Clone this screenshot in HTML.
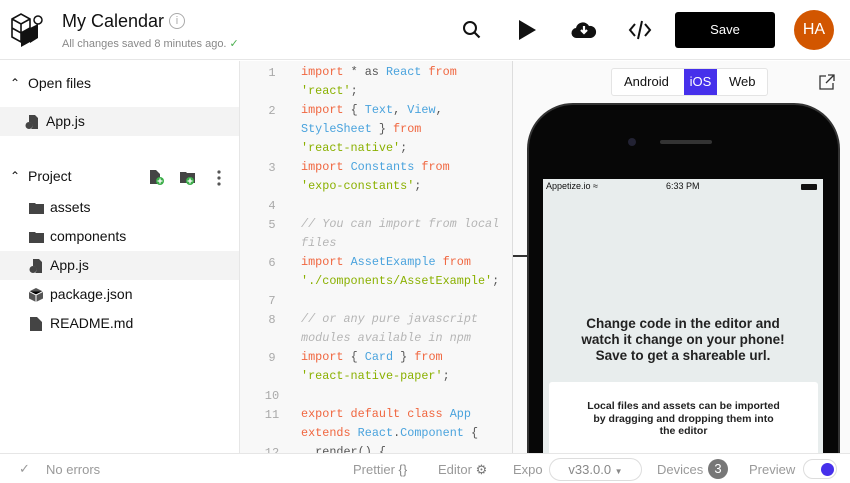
<!DOCTYPE html>
<html><head><style>
*{margin:0;padding:0;box-sizing:border-box}
body{width:850px;height:483px;overflow:hidden;font-family:"Liberation Sans",sans-serif;background:#fff;position:relative;color:#111}
.abs{position:absolute}
.hdr{left:0;top:0;width:850px;height:60px;border-bottom:1px solid #e6e6e6}
.side{left:0;top:61px;width:240px;height:392px;background:#fff;border-right:1px solid #e6e6e6}
.row{position:absolute;left:0;width:239px;height:29px;font-size:14px;line-height:29px}
.ed{left:240px;top:61px;width:272px;height:392px;background:#f8f8f8;font-family:"Liberation Mono",monospace;font-size:11.8px;overflow:hidden}
.ln{position:absolute;left:0;width:64px;text-align:center;color:#aaa;font-size:12px}
.cl{position:absolute;left:61px;white-space:pre;color:#555}
.k{color:#f0663f}.i{color:#4aa3dd}.s{color:#8ab000}.c{color:#b5b5b5;font-style:italic}
.pv{left:512px;top:61px;width:338px;height:392px;background:#fafafa;border-left:1px solid #ddd;overflow:hidden}
.ft{left:0;top:453px;width:850px;height:30px;border-top:1px solid #e6e6e6;background:#fff;font-size:13px;color:#999}
</style></head><body>
<div class="abs hdr">
 <svg class="abs" style="left:10px;top:10px" width="38" height="38" viewBox="0 0 38 38"><g fill="none" stroke="#111" stroke-width="1.6"><path d="M2 9l9-5 9 5v18l-9 5-9-5z M2 18l9 5 9-5 M11 14v18 M2 9l9 5 9-5"/></g><path d="M20 18l8-4v14l-8 5z M11 23l9-5v14l-9 5z" fill="#111"/><circle cx="28" cy="10" r="4" fill="#fff" stroke="#111" stroke-width="1.5"/></svg>
 <div class="abs" style="left:62px;top:11px;font-size:18px;color:#111">My Calendar</div>
 <div class="abs" style="left:169px;top:13px;width:16px;height:16px;border:1.3px solid #aaa;border-radius:50%;font-size:11px;color:#aaa;text-align:center;line-height:14px">i</div>
 <div class="abs" style="left:62px;top:37px;font-size:11px;color:#888">All changes saved 8 minutes ago. <span style="color:#4caf50">✓</span></div>
 <svg class="abs" style="left:462px;top:20px" width="20" height="20" viewBox="0 0 20 20"><circle cx="8" cy="8" r="6" fill="none" stroke="#111" stroke-width="2"/><path d="M12.5 12.5l5 5" stroke="#111" stroke-width="2.2"/></svg>
 <svg class="abs" style="left:519px;top:20px" width="18" height="20"><path d="M0 0l17 10-17 10z" fill="#111"/></svg>
 <svg class="abs" style="left:571px;top:20px" width="26" height="20" viewBox="0 0 26 20"><path d="M6 18a5 5 0 0 1-1-10 7 7 0 0 1 13-2 6 6 0 0 1 2 12z" fill="#111"/><path d="M13 6v7 M10 10l3 3 3-3" stroke="#fff" stroke-width="2.2" fill="none"/></svg>
 <svg class="abs" style="left:628px;top:19px" width="24" height="22"><path d="M7 5l-5 6 5 6 M17 5l5 6-5 6 M14 2l-4 18" stroke="#111" stroke-width="2" fill="none"/></svg>
 <div class="abs" style="left:675px;top:12px;width:100px;height:36px;background:#000;border-radius:3px;color:#fff;font-size:13px;text-align:center;line-height:36px">Save</div>
 <div class="abs" style="left:794px;top:10px;width:40px;height:40px;background:#d25600;border-radius:50%;color:#fff;font-size:16px;text-align:center;line-height:40px">HA</div>
</div>
<div class="abs side">
 <div class="row" style="top:8px"><span style="position:absolute;left:10px;font-size:12px">⌃</span><span style="position:absolute;left:28px">Open files</span></div>
 <div class="row" style="top:46px;background:#f3f3f3"><svg style="position:absolute;left:25px;top:8px" width="13" height="14"><path d="M4 0h6l3 3v11H6A4 4 0 0 0 4 7z" fill="#444"/><circle cx="4" cy="10.5" r="3.5" fill="#444"/></svg><span style="position:absolute;left:46px">App.js</span></div>
 <div class="row" style="top:101px"><span style="position:absolute;left:10px;font-size:12px">⌃</span><span style="position:absolute;left:28px">Project</span>
  <svg style="position:absolute;left:150px;top:8px" width="14" height="16"><path d="M0 0h6l4 4v10H0z" fill="#444"/><circle cx="10" cy="11" r="4" fill="#3cae4a"/><path d="M10 8.5v5M7.5 11h5" stroke="#fff" stroke-width="1.3"/></svg>
  <svg style="position:absolute;left:180px;top:8px" width="16" height="16"><path d="M0 2h6l1 1h8v10H0z" fill="#444"/><circle cx="10" cy="11" r="4" fill="#3cae4a"/><path d="M10 8.5v5M7.5 11h5" stroke="#fff" stroke-width="1.3"/></svg>
  <svg style="position:absolute;left:217px;top:8px" width="4" height="16"><circle cx="2" cy="2" r="1.6" fill="#555"/><circle cx="2" cy="8" r="1.6" fill="#555"/><circle cx="2" cy="14" r="1.6" fill="#555"/></svg></div>
 <div class="row" style="top:132px"><svg style="position:absolute;left:29px;top:9px" width="15" height="12"><path d="M0 1h6l1 1h8v10H0z" fill="#444"/></svg><span style="position:absolute;left:50px">assets</span></div>
 <div class="row" style="top:161px"><svg style="position:absolute;left:29px;top:9px" width="15" height="12"><path d="M0 1h6l1 1h8v10H0z" fill="#444"/></svg><span style="position:absolute;left:50px">components</span></div>
 <div class="row" style="top:190px;background:#f3f3f3"><svg style="position:absolute;left:29px;top:8px" width="13" height="14"><path d="M4 0h6l3 3v11H6A4 4 0 0 0 4 7z" fill="#444"/><circle cx="4" cy="10.5" r="3.5" fill="#444"/></svg><span style="position:absolute;left:50px">App.js</span></div>
 <div class="row" style="top:219px"><svg style="position:absolute;left:29px;top:8px" width="14" height="14"><path d="M7 0l7 3.5v7L7 14 0 10.5v-7z" fill="#555"/><path d="M0 3.5l7 3.5 7-3.5M7 7v7" stroke="#fff" stroke-width="1"/></svg><span style="position:absolute;left:50px">package.json</span></div>
 <div class="row" style="top:248px"><svg style="position:absolute;left:30px;top:8px" width="12" height="14"><path d="M0 0h7l5 5v9H0z" fill="#444"/></svg><span style="position:absolute;left:50px">README.md</span></div>
</div>
<div class="abs ed">
<div class="ln" style="top:5px">1</div><div class="cl" style="top:4px"><span class="k">import</span> * as <span class="i">React</span> <span class="k">from</span></div>
<div class="cl" style="top:23px"><span class="s">'react'</span>;</div>
<div class="ln" style="top:43px">2</div><div class="cl" style="top:42px"><span class="k">import</span> { <span class="i">Text</span>, <span class="i">View</span>,</div>
<div class="cl" style="top:61px"><span class="i">StyleSheet</span> } <span class="k">from</span></div>
<div class="cl" style="top:80px"><span class="s">'react-native'</span>;</div>
<div class="ln" style="top:100px">3</div><div class="cl" style="top:99px"><span class="k">import</span> <span class="i">Constants</span> <span class="k">from</span></div>
<div class="cl" style="top:118px"><span class="s">'expo-constants'</span>;</div>
<div class="ln" style="top:138px">4</div>
<div class="ln" style="top:157px">5</div><div class="cl c" style="top:156px">// You can import from local</div>
<div class="cl c" style="top:175px">files</div>
<div class="ln" style="top:195px">6</div><div class="cl" style="top:194px"><span class="k">import</span> <span class="i">AssetExample</span> <span class="k">from</span></div>
<div class="cl" style="top:213px"><span class="s">'./components/AssetExample'</span>;</div>
<div class="ln" style="top:233px">7</div>
<div class="ln" style="top:252px">8</div><div class="cl c" style="top:251px">// or any pure javascript</div>
<div class="cl c" style="top:270px">modules available in npm</div>
<div class="ln" style="top:290px">9</div><div class="cl" style="top:289px"><span class="k">import</span> { <span class="i">Card</span> } <span class="k">from</span></div>
<div class="cl" style="top:308px"><span class="s">'react-native-paper'</span>;</div>
<div class="ln" style="top:328px">10</div>
<div class="ln" style="top:347px">11</div><div class="cl" style="top:346px"><span class="k">export default class</span> <span class="i">App</span></div>
<div class="cl" style="top:365px"><span class="k">extends</span> <span class="i">React</span>.<span class="i">Component</span> {</div>
<div class="ln" style="top:385px">12</div><div class="cl" style="top:384px">  render() {</div>
</div>
<div class="abs pv">
 <div class="abs" style="left:0;top:194px;width:16px;height:2px;background:#333"></div>
 <div class="abs" style="left:98px;top:7px;width:157px;height:28px;background:#fff;border:1px solid #e4e4e4;border-radius:3px;font-size:13px;line-height:26px">
  <span class="abs" style="left:12px">Android</span>
  <span class="abs" style="left:72px;top:0;width:33px;height:26px;background:#4630eb;color:#fff;text-align:center">iOS</span>
  <span class="abs" style="left:117px">Web</span></div>
 <svg class="abs" style="left:306px;top:13px" width="16" height="16"><path d="M7 2H1v13h13V9 M9 1h6v6 M15 1L7 9" stroke="#333" stroke-width="1.3" fill="none"/></svg>
 <div class="abs" style="left:14px;top:42px;width:313px;height:400px;background:#070707;border-radius:46px;border:2px solid #333"></div>
 <div class="abs" style="left:115px;top:77px;width:8px;height:8px;border-radius:50%;background:#223"></div>
 <div class="abs" style="left:147px;top:79px;width:52px;height:4px;border-radius:2px;background:#333"></div>
 <div class="abs" style="left:30px;top:118px;width:280px;height:280px;background:#e8eded"></div>
 <div class="abs" style="left:33px;top:120px;font-size:9px;color:#111">Appetize.io ≈</div>
 <div class="abs" style="left:153px;top:120px;font-size:9px;color:#111">6:33 PM</div>
 <div class="abs" style="left:288px;top:123px;width:16px;height:6px;background:#111;border-radius:1px"></div>
 <div class="abs" style="left:30px;top:255px;width:280px;text-align:center;font-size:13.5px;font-weight:bold;line-height:16px;color:#222">Change code in the editor and<br>watch it change on your phone!<br>Save to get a shareable url.</div>
 <div class="abs" style="left:36px;top:321px;width:269px;height:80px;background:#fff;border-radius:3px"></div>
 <div class="abs" style="left:36px;top:339px;width:269px;text-align:center;font-size:10.5px;font-weight:bold;line-height:12.5px;color:#222">Local files and assets can be imported<br>by dragging and dropping them into<br>the editor</div>
</div>
<div class="abs ft">
 <span class="abs" style="left:19px;top:7px">✓</span><span class="abs" style="left:46px;top:8px">No errors</span>
 <span class="abs" style="left:353px;top:8px">Prettier <span style="color:#888">{}</span></span>
 <span class="abs" style="left:438px;top:8px">Editor <span style="color:#777">⚙</span></span>
 <span class="abs" style="left:513px;top:8px">Expo</span>
 <div class="abs" style="left:549px;top:4px;width:93px;height:23px;border:1px solid #ddd;border-radius:12px;text-align:center;line-height:21px;color:#888">v33.0.0 <span style="font-size:8px">▼</span></div>
 <span class="abs" style="left:657px;top:8px">Devices</span>
 <div class="abs" style="left:708px;top:5px;width:20px;height:20px;border-radius:50%;background:#777;color:#fff;text-align:center;line-height:20px">3</div>
 <span class="abs" style="left:749px;top:8px">Preview</span>
 <div class="abs" style="left:803px;top:5px;width:34px;height:20px;border:1px solid #ddd;border-radius:10px"><div class="abs" style="left:17px;top:3px;width:13px;height:13px;border-radius:50%;background:#4630eb"></div></div>
</div>
</body></html>
